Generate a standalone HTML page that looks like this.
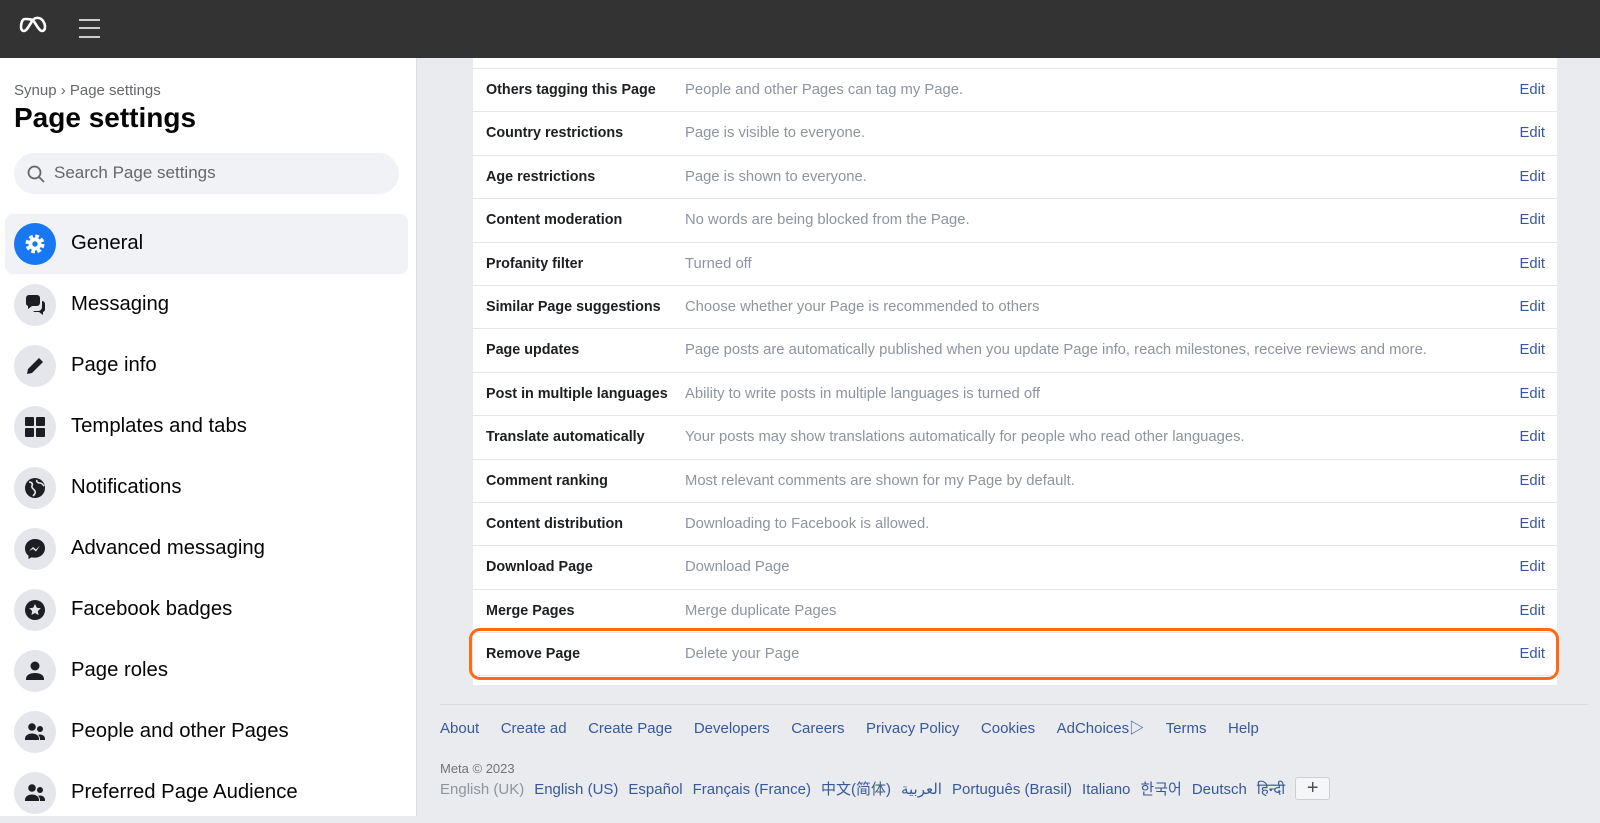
<!DOCTYPE html>
<html><head><meta charset="utf-8"><style>
*{margin:0;padding:0;box-sizing:border-box}
html,body{width:1600px;height:816px}
body{overflow:hidden;background:#e9ebee;font-family:"Liberation Sans","Noto Sans CJK SC",sans-serif;position:relative;color:#1c1e21}
.top{position:absolute;left:0;top:0;width:1600px;height:58px;background:#333}
.side{position:absolute;left:0;top:58px;width:417px;height:758px;background:#fff;border-right:1px solid #dadde1}
.bc{position:absolute;left:14px;font-size:15px;color:#65676b}
.h1{position:absolute;left:14px;font-size:28px;font-weight:bold;color:#050505}
.search{position:absolute;left:14px;width:385px;height:41px;border-radius:21px;background:#f0f2f5;font-size:17px;color:#65676b;padding:10px 0 0 40px}
.item{position:absolute;left:5px;width:403px;height:60px;border-radius:8px}
.item .ic{position:absolute;left:9px;top:9px;width:42px;height:42px;border-radius:50%;background:#e4e6eb;display:flex;align-items:center;justify-content:center}
.item .t{position:absolute;left:66px;top:18px;font-size:20.3px;color:#050505}
.card{position:absolute;left:473px;top:58px;width:1084px;height:627px;background:#fff}
.row{position:absolute;left:0;width:1084px;height:43.4px;border-top:1px solid #e5e6e9}
.row .l{position:absolute;left:13px;top:13px;font-weight:bold;color:#1c1e21;font-size:14.35px}
.row .d{position:absolute;left:212px;top:13px;color:#8d949e;font-size:14.8px}
.row .e{position:absolute;right:12px;top:13px;color:#385898;font-size:14.8px}
.orange{position:absolute;left:469px;top:628px;width:1090px;height:52px;border:3px solid #ff6a13;border-radius:11px}
.sep{position:absolute;left:440px;top:704px;width:1148px;height:1px;background:#dadde1}
.links{position:absolute;left:440px;top:717px;font-size:15px;color:#385898;white-space:nowrap}
.links span{margin-right:21.5px}
.meta{position:absolute;left:440px;top:761px;font-size:13px;color:#737373}
.langs{position:absolute;left:440px;top:778px;font-size:15px;color:#385898;white-space:nowrap}
.langs span{margin-right:10px}
.plus{display:inline-block;width:35px;height:23px;border:1px solid #ccd0d5;background:#f5f6f7;border-radius:3px;vertical-align:middle;text-align:center;color:#4b4f56;font-size:20px;line-height:20px;margin-top:-4px}
</style></head><body>
<div class="top">
<svg style="position:absolute;left:19px;top:16px" width="28" height="18" viewBox="0 0 28 18"><path d="M6 3C3 3 2 8 2 11c0 3 1.5 4 3 4 2.5 0 5-5 8.5-10.5C15 2.5 17 1.5 19.5 2 23.5 2.5 26 7 26 11c0 3-1.5 4-3 4-2.5 0-5-5-8-9.5C13 3 9 3 6 3z" fill="none" stroke="#fff" stroke-width="2.6"/></svg>
<div style="position:absolute;left:79px;top:19px;width:21px;height:2px;background:#ccc"></div>
<div style="position:absolute;left:79px;top:27px;width:21px;height:2px;background:#ccc"></div>
<div style="position:absolute;left:79px;top:36px;width:21px;height:2px;background:#ccc"></div>
</div>
<div class="side">
<div class="bc" style="top:24px">Synup › Page settings</div>
<div class="h1" style="top:44px">Page settings</div>
<div class="search" style="top:95px"><svg style="position:absolute;left:13px;top:12px" width="18" height="18" viewBox="0 0 18 18"><circle cx="7.5" cy="7.5" r="6" fill="none" stroke="#65676b" stroke-width="1.8"/><path d="M12 12l5 5" stroke="#65676b" stroke-width="1.8"/></svg>Search Page settings</div>
<div class="item" style="top:156px;background:#f0f2f5"><div class="ic" style="background:#1877f2"><svg width="24" height="24" viewBox="0 0 24 24"><circle cx="12" cy="12" r="7" fill="none" stroke="#fff" stroke-width="5" stroke-dasharray="3.3 2.2"/><circle cx="12" cy="12" r="6.5" fill="#fff"/><circle cx="12" cy="12" r="2.7" fill="#1877f2"/></svg></div><div class="t">General</div></div>
<div class="item" style="top:217px"><div class="ic"><svg width="22" height="22" viewBox="0 0 22 22"><path d="M2 4a3 3 0 013-3h8a3 3 0 013 3v5a3 3 0 01-3 3H8l-4 3v-3a3 3 0 01-2-3z" fill="#1c1e21"/><path d="M18 7a3 3 0 013 3v5a3 3 0 01-2 3v3l-4-3h-4a3 3 0 01-2-1h5a4 4 0 004-4z" fill="#1c1e21"/></svg></div><div class="t">Messaging</div></div>
<div class="item" style="top:278px"><div class="ic"><svg width="22" height="22" viewBox="0 0 22 22"><path d="M3 19l1-5L15 3l4 4L8 18z" fill="#1c1e21"/></svg></div><div class="t">Page info</div></div>
<div class="item" style="top:339px"><div class="ic"><svg width="22" height="22" viewBox="0 0 22 22"><rect x="1" y="1" width="9" height="9" rx="1" fill="#1c1e21"/><rect x="12" y="1" width="9" height="9" rx="1" fill="#1c1e21"/><rect x="1" y="12" width="9" height="9" rx="1" fill="#1c1e21"/><rect x="12" y="12" width="9" height="9" rx="1" fill="#1c1e21"/></svg></div><div class="t">Templates and tabs</div></div>
<div class="item" style="top:400px"><div class="ic"><svg width="22" height="22" viewBox="0 0 22 22"><circle cx="11" cy="11" r="10" fill="#1c1e21"/><path d="M5 5c3 0 4 2 3 4s2 3 3 5-1 4-2 5M13 3c-1 2 1 3 3 3s3 2 4 3" fill="none" stroke="#e4e6eb" stroke-width="1.6"/></svg></div><div class="t">Notifications</div></div>
<div class="item" style="top:461px"><div class="ic"><svg width="22" height="22" viewBox="0 0 22 22"><path d="M11 1C5.5 1 1 5 1 10.5c0 3 1.3 5.5 3.5 7.2V21l3.3-1.8c1 .3 2 .4 3.2.4 5.5 0 10-4 10-9.5S16.5 1 11 1z" fill="#1c1e21"/><path d="M5 13l4-4 3 2.5 4-4-4 6-3-2.5z" fill="#e4e6eb"/></svg></div><div class="t">Advanced messaging</div></div>
<div class="item" style="top:522px"><div class="ic"><svg width="22" height="22" viewBox="0 0 22 22"><circle cx="11" cy="11" r="10" fill="#1c1e21"/><path d="M11 5l1.8 3.8 4 .5-3 2.8.8 4L11 14l-3.6 2 .8-4-3-2.8 4-.5z" fill="#e4e6eb"/></svg></div><div class="t">Facebook badges</div></div>
<div class="item" style="top:583px"><div class="ic"><svg width="22" height="22" viewBox="0 0 22 22"><circle cx="11" cy="6" r="4.5" fill="#1c1e21"/><path d="M2 19c0-4 4-6 9-6s9 2 9 6v1H2z" fill="#1c1e21"/></svg></div><div class="t">Page roles</div></div>
<div class="item" style="top:644px"><div class="ic"><svg width="22" height="22" viewBox="0 0 22 22"><circle cx="8" cy="6" r="3.8" fill="#1c1e21"/><circle cx="16" cy="8" r="3" fill="#1c1e21"/><path d="M1 18c0-3.5 3-5.5 7-5.5s7 2 7 5.5v1H1z" fill="#1c1e21"/><path d="M16 19v-1c0-2-1-3.5-2-4.3 4 -1 7 1 7 4v1.3z" fill="#1c1e21"/></svg></div><div class="t">People and other Pages</div></div>
<div class="item" style="top:705px"><div class="ic"><svg width="22" height="22" viewBox="0 0 22 22"><circle cx="8" cy="6" r="3.8" fill="#1c1e21"/><circle cx="16" cy="8" r="3" fill="#1c1e21"/><path d="M1 18c0-3.5 3-5.5 7-5.5s7 2 7 5.5v1H1z" fill="#1c1e21"/><path d="M16 19v-1c0-2-1-3.5-2-4.3 4 -1 7 1 7 4v1.3z" fill="#1c1e21"/></svg></div><div class="t">Preferred Page Audience</div></div>
</div>
<div class="card">
<div class="row" style="top:10px"><span class="l">Others tagging this Page</span><span class="d">People and other Pages can tag my Page.</span><span class="e">Edit</span></div>
<div class="row" style="top:53.4px"><span class="l">Country restrictions</span><span class="d">Page is visible to everyone.</span><span class="e">Edit</span></div>
<div class="row" style="top:96.8px"><span class="l">Age restrictions</span><span class="d">Page is shown to everyone.</span><span class="e">Edit</span></div>
<div class="row" style="top:140.2px"><span class="l">Content moderation</span><span class="d">No words are being blocked from the Page.</span><span class="e">Edit</span></div>
<div class="row" style="top:183.6px"><span class="l">Profanity filter</span><span class="d">Turned off</span><span class="e">Edit</span></div>
<div class="row" style="top:227px"><span class="l">Similar Page suggestions</span><span class="d">Choose whether your Page is recommended to others</span><span class="e">Edit</span></div>
<div class="row" style="top:270.4px"><span class="l">Page updates</span><span class="d">Page posts are automatically published when you update Page info, reach milestones, receive reviews and more.</span><span class="e">Edit</span></div>
<div class="row" style="top:313.8px"><span class="l">Post in multiple languages</span><span class="d">Ability to write posts in multiple languages is turned off</span><span class="e">Edit</span></div>
<div class="row" style="top:357.2px"><span class="l">Translate automatically</span><span class="d">Your posts may show translations automatically for people who read other languages.</span><span class="e">Edit</span></div>
<div class="row" style="top:400.6px"><span class="l">Comment ranking</span><span class="d">Most relevant comments are shown for my Page by default.</span><span class="e">Edit</span></div>
<div class="row" style="top:444px"><span class="l">Content distribution</span><span class="d">Downloading to Facebook is allowed.</span><span class="e">Edit</span></div>
<div class="row" style="top:487.4px"><span class="l">Download Page</span><span class="d">Download Page</span><span class="e">Edit</span></div>
<div class="row" style="top:530.8px"><span class="l">Merge Pages</span><span class="d">Merge duplicate Pages</span><span class="e">Edit</span></div>
<div class="row" style="top:574.2px;border-bottom:1px solid #e5e6e9;height:44px"><span class="l">Remove Page</span><span class="d">Delete your Page</span><span class="e">Edit</span></div>
</div>
<div class="orange"></div>
<div class="sep"></div>
<div class="links"><span>About</span><span>Create ad</span><span>Create Page</span><span>Developers</span><span>Careers</span><span>Privacy Policy</span><span>Cookies</span><span>AdChoices▷</span><span>Terms</span><span>Help</span></div>
<div class="meta">Meta © 2023</div>
<div class="langs"><span style="color:#90949c">English (UK)</span><span>English (US)</span><span>Español</span><span>Français (France)</span><span>中文(简体)</span><span>العربية</span><span>Português (Brasil)</span><span>Italiano</span><span>한국어</span><span>Deutsch</span><span>हिन्दी</span><span class="plus">+</span></div>
</body></html>
